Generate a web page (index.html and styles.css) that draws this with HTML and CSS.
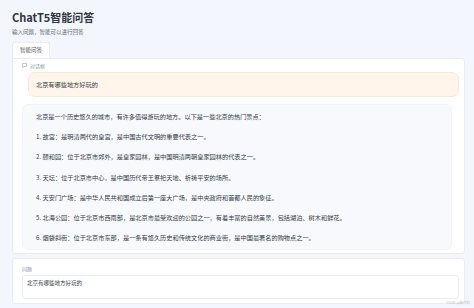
FILE: index.html
```html
<!DOCTYPE html>
<html>
<head>
    <title>ChatT5智能问答</title>
    <link rel="stylesheet" href="styles.css">
</head>
<body>
    <div class="app">
        <h1>ChatT5智能问答</h1>
        <p class="subtitle">输入问题，智能可以进行回答</p>
        <div class="tabs">
            <div class="tab active">智能问答</div>
        </div>
        <div class="panel chat-panel">
            <div class="block-label">
                <svg width="5" height="5" viewBox="0 0 10 10"><path d="M1 1h8v6H4l-3 2z" fill="none" stroke="#9ca3af" stroke-width="1.2"/></svg>
                <span>对话框</span>
            </div>
            <div class="msg user">北京有哪些地方好玩的</div>
            <div class="msg bot">
                <p>北京是一个历史悠久的城市，有许多值得游玩的地方。以下是一些北京的热门景点：</p>
                <p>1. 故宫：是明清两代的皇宫，是中国古代文明的重要代表之一。</p>
                <p>2. 颐和园：位于北京市郊外，是皇家园林，是中国明清两朝皇家园林的代表之一。</p>
                <p>3. 天坛：位于北京市中心，是中国历代帝王祭祀天地、祈祷平安的场所。</p>
                <p>4. 天安门广场：是中华人民共和国成立后第一座大广场，是中央政府和首都人民的象征。</p>
                <p>5. 北海公园：位于北京市西南部，是北京市最受欢迎的公园之一，有着丰富的自然美景，包括湖泊、树木和鲜花。</p>
                <p>6. 烟袋斜街：位于北京市东部，是一条有悠久历史和传统文化的商业街，是中国最著名的购物点之一。</p>
            </div>
        </div>
        <div class="panel input-panel">
            <label class="field-label" for="question">问题</label>
            <textarea id="question" class="question">北京有哪些地方好玩的</textarea>
        </div>
    </div>
    <div class="watermark">CSDN @敲代码</div>
</body>
</html>
```

FILE: styles.css
```css
:root {
    --bg-color: #f3f6fc;
    --panel-bg: #ffffff;
    --border-color: #e8ecf3;
    --text-color: #374151;
    --muted-color: #8b93a1;
    --user-bg: #fff5ea;
    --user-border: #fbe8d4;
    --bot-bg: #f7f9fc;
}

body {
    margin: 0;
    background-color: var(--bg-color);
    color: var(--text-color);
    font-family: "Noto Sans CJK SC", "Noto Sans", sans-serif;
    height: 308px;
    overflow: hidden;
    position: relative;
}

.app {
    padding: 9px 9px 0 12px;
    display: flex;
    flex-direction: column;
}

h1 {
    margin: 0;
    font-size: 11px;
    line-height: 16px;
    font-weight: 700;
    color: #2f3541;
}

.subtitle {
    margin: 3px 0 0 0;
    font-size: 5.5px;
    line-height: 8px;
    color: #5f6673;
}

.tabs {
    display: flex;
    margin-top: 6px;
}

.tab {
    font-size: 5.5px;
    line-height: 15px;
    padding: 0 7px;
    color: #4b5260;
}

.tab.active {
    background-color: var(--panel-bg);
    border: 1px solid var(--border-color);
    border-bottom: none;
    border-radius: 3px 3px 0 0;
}

.panel {
    background-color: var(--panel-bg);
    border: 1px solid var(--border-color);
    border-radius: 0 3px 3px 3px;
}

.chat-panel {
    padding: 2px 5px 3px 9px;
    display: flex;
    flex-direction: column;
}

.block-label {
    display: flex;
    align-items: center;
    gap: 3px;
    font-size: 5px;
    line-height: 9px;
    color: var(--muted-color);
}

.msg {
    font-size: 6.2px;
    color: #333a46;
}

.msg.user {
    margin: 2px 0 0 6px;
    height: 23px;
    line-height: 23px;
    padding: 0 7px;
    background-color: var(--user-bg);
    border: 1px solid var(--user-border);
    border-radius: 7px;
}

.msg.bot {
    margin: 7px 7px 0 0;
    padding: 2px 13px 1px 13px;
    background-color: var(--bot-bg);
    border: 1px solid #f0f3f8;
    border-radius: 6px;
}

.msg.bot p {
    margin: 0;
    line-height: 20.2px;
    white-space: nowrap;
}

.input-panel {
    margin-top: 4px;
    padding: 6px 5px 4px 9px;
    border-radius: 3px;
    display: flex;
    flex-direction: column;
}

.field-label {
    font-size: 5px;
    line-height: 8px;
    color: var(--muted-color);
}

.question {
    margin-top: 2px;
    height: 24px;
    box-sizing: border-box;
    resize: none;
    border: 1px solid var(--border-color);
    border-radius: 3px;
    padding: 3px 4px;
    font-family: inherit;
    font-size: 5.5px;
    line-height: 8px;
    color: #333a46;
    background-color: var(--panel-bg);
    outline: none;
}

.watermark {
    position: absolute;
    right: 4px;
    bottom: 3px;
    font-size: 3.5px;
    color: #b8bec8;
}
```
